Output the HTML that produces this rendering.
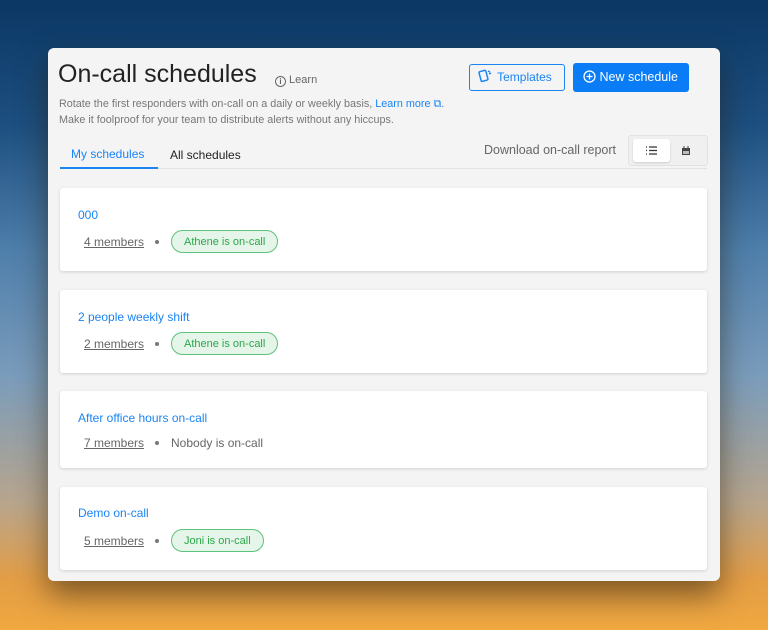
<!DOCTYPE html>
<html><head><style>
*{margin:0;padding:0;box-sizing:border-box}
body{width:768px;height:630px;overflow:hidden;font-family:"Liberation Sans",sans-serif;position:relative;
background:linear-gradient(180deg,#0b3764 0%,#1d4f80 20%,#4f7fab 40%,#7b9cbb 60%,#b8a58c 80%,#e39d45 92%,#f0a840 100%);}
.a{position:absolute;white-space:nowrap}
.panel{position:absolute;left:48px;top:48px;width:672px;height:533px;background:#f4f4f4;border-radius:6px;box-shadow:0 14px 30px rgba(40,30,10,.55)}
.card{position:absolute;left:12px;width:647px;background:#fff;border-radius:3px;box-shadow:0 1px 3px rgba(0,0,0,.15)}
.t{position:absolute;left:18px;color:#1a84f5;font-size:12px}
.m{position:absolute;left:24px;color:#666;font-size:12px;text-decoration:underline}
.d{position:absolute;left:95px;width:4px;height:4px;border-radius:2px;background:#777}
.p{position:absolute;left:111px;height:23px;border:1px solid #5fc27a;background:#e6f5e9;color:#2aa84a;font-size:11px;border-radius:12px;padding:0 12px;line-height:23px}
</style></head><body>
<div class="panel">
<div class="a" style="left:10px;top:12px;font-size:25px;color:#222">On-call schedules</div>
<div class="a" style="left:227px;top:26px;font-size:11px;color:#666"><span style="display:inline-block;width:11px;height:11px;border:1.3px solid #666;border-radius:50%;vertical-align:-1px;font-size:8px;text-align:center;line-height:9px;font-weight:bold">i</span> Learn</div>
<div class="a" style="left:11px;top:50px;font-size:10.8px;color:#777">Rotate the first responders with on-call on a daily or weekly basis, <span style="color:#1a84f5">Learn more ⧉</span>.</div>
<div class="a" style="left:11px;top:66px;font-size:10.8px;color:#777">Make it foolproof for your team to distribute alerts without any hiccups.</div>
<div class="a" style="left:421px;top:16px;width:96px;height:27px;border:1px solid #1a84f5;border-radius:3px;color:#1a84f5;font-size:12px;line-height:25px;padding-left:8px"><svg width="16" height="14" viewBox="0 0 16 14" style="vertical-align:-2px"><rect x="2" y="2" width="7" height="10" rx="1" transform="rotate(-15 5 7)" fill="none" stroke="#1a84f5" stroke-width="1.5"/><path d="M10 2l2 1M11 5l2-1" stroke="#1a84f5" stroke-width="1.3"/></svg> Templates</div>
<div class="a" style="left:525px;top:15px;width:116px;height:29px;background:#0a7cf5;border-radius:3px;color:#fff;font-size:12.5px;line-height:29px;padding-left:10px"><svg width="13" height="13" viewBox="0 0 13 13" style="vertical-align:-2px"><circle cx="6.5" cy="6.5" r="5.5" fill="none" stroke="#fff" stroke-width="1.3"/><path d="M6.5 3.5v6M3.5 6.5h6" stroke="#fff" stroke-width="1.3"/></svg> New schedule</div>
<div class="a" style="left:23px;top:99px;font-size:12px;color:#1a84f5">My schedules</div>
<div class="a" style="left:122px;top:100px;font-size:12px;color:#222">All schedules</div>
<div style="position:absolute;left:12px;top:120px;width:647px;height:1px;background:#e2e2e2"></div>
<div style="position:absolute;left:12px;top:119px;width:98px;height:2px;background:#1a84f5"></div>
<div class="a" style="left:436px;top:95px;font-size:12.5px;color:#666">Download on-call report</div>
<div style="position:absolute;left:580px;top:87px;width:80px;height:31px;border:1px solid #e2e2e2;border-radius:3px;background:#f0f0f0"></div>
<div style="position:absolute;left:585px;top:91px;width:37px;height:23px;background:#fff;border-radius:3px;box-shadow:0 1px 2px rgba(0,0,0,.15)"><svg width="37" height="23"><g stroke="#333" stroke-width="1.3"><path d="M13 8h1M13 11.5h1M13 15h1M16 8h8M16 11.5h8M16 15h8"/></g></svg></div>
<svg style="position:absolute;left:633px;top:98px" width="10" height="10"><rect x="1" y="2" width="8" height="7" fill="#444"/><rect x="2" y="5" width="6" height="3" fill="#bbb"/><path d="M3 0v2M7 0v2" stroke="#444"/></svg>
<div class="card" style="top:140px;height:83px"><div class="t" style="top:20px">000</div><div class="m" style="top:47px">4 members</div><div class="d" style="top:52px"></div><div class="p" style="top:42px">Athene is on-call</div></div>
<div class="card" style="top:242px;height:83px"><div class="t" style="top:20px">2 people weekly shift</div><div class="m" style="top:47px">2 members</div><div class="d" style="top:52px"></div><div class="p" style="top:42px">Athene is on-call</div></div>
<div class="card" style="top:343px;height:77px"><div class="t" style="top:20px">After office hours on-call</div><div class="m" style="top:45px">7 members</div><div class="d" style="top:50px"></div><div class="a" style="left:111px;top:45px;font-size:12px;color:#666">Nobody is on-call</div></div>
<div class="card" style="top:439px;height:83px"><div class="t" style="top:19px">Demo on-call</div><div class="m" style="top:47px">5 members</div><div class="d" style="top:52px"></div><div class="p" style="top:42px">Joni is on-call</div></div>
</div>
</body></html>
